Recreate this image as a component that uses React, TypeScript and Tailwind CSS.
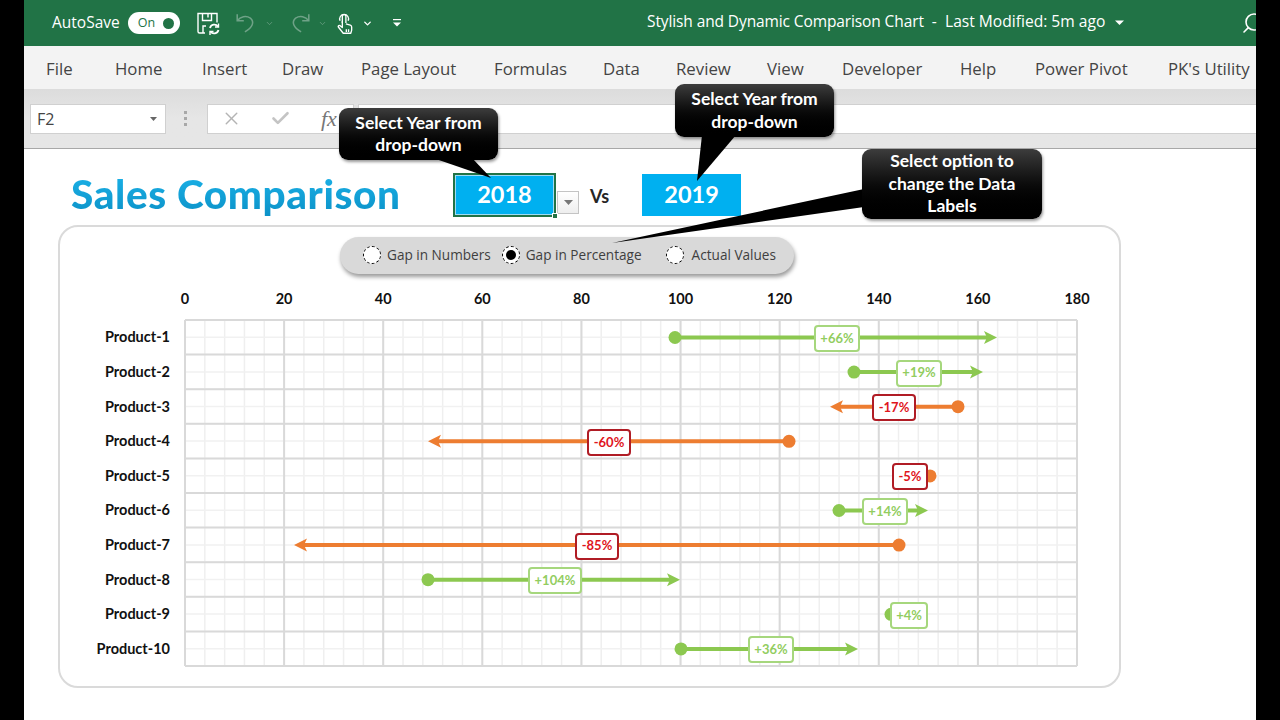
import { ChevronDown, Search, X, Check } from 'lucide-react';

// width of each tab slot, so the text starts line up with the ribbon
const TABS = [
  { name: 'File', w: 69 },
  { name: 'Home', w: 87 },
  { name: 'Insert', w: 80 },
  { name: 'Draw', w: 79 },
  { name: 'Page Layout', w: 133 },
  { name: 'Formulas', w: 109 },
  { name: 'Data', w: 73 },
  { name: 'Review', w: 91 },
  { name: 'View', w: 75 },
  { name: 'Developer', w: 118 },
  { name: 'Help', w: 75 },
  { name: 'Power Pivot', w: 133 },
  { name: "PK's Utility", w: 84 },
];
const AXIS = [0, 20, 40, 60, 80, 100, 120, 140, 160, 180];

const GREEN = '#8cc850';
const ORANGE = '#ed7d31';

// positions are in px inside the plot area (892 x 346)
const ROWS = [
  { name: 'Product-1', from: 490, to: 812, label: '+66%', left: 629, width: 46, up: true },
  { name: 'Product-2', from: 669, to: 798, label: '+19%', left: 711, width: 46, up: true },
  { name: 'Product-3', from: 773, to: 645, label: '-17%', left: 687, width: 44, up: false },
  { name: 'Product-4', from: 604, to: 243, label: '-60%', left: 402, width: 44, up: false },
  { name: 'Product-5', from: 745, to: 745, label: '-5%', left: 707, width: 36, up: false },
  { name: 'Product-6', from: 654, to: 743, label: '+14%', left: 677, width: 46, up: true },
  { name: 'Product-7', from: 714, to: 109, label: '-85%', left: 390, width: 44, up: false },
  { name: 'Product-8', from: 243, to: 495, label: '+104%', left: 343, width: 54, up: true },
  { name: 'Product-9', from: 706, to: 706, label: '+4%', left: 705, width: 38, up: true },
  { name: 'Product-10', from: 496, to: 673, label: '+36%', left: 563, width: 46, up: true },
];

const ROW_H = 34.6;

function Plot() {
  const minorX = Array.from({ length: 46 }, (_, i) => i * 19.82);
  const minorY = Array.from({ length: 21 }, (_, i) => i * (ROW_H / 2));
  return (
    <div className="relative w-[892px] h-[346px]">
      <svg width="892" height="346" className="absolute left-0 top-0 overflow-visible">
        {minorX.map((x) => (
          <line key={x} x1={x} x2={x} y1={0} y2={346} stroke="#efefef" strokeWidth="1.5" />
        ))}
        {minorY.map((y) => (
          <line key={y} x1={0} x2={892} y1={y} y2={y} stroke="#f1f1f1" strokeWidth="1.5" />
        ))}
        {AXIS.map((_, i) => (
          <line key={i} x1={i * 99.11} x2={i * 99.11} y1={0} y2={346} stroke="#d9d9d9" strokeWidth="2" />
        ))}
        {ROWS.map((_, i) => (
          <line key={i} x1={0} x2={892} y1={i * ROW_H} y2={i * ROW_H} stroke="#d9d9d9" strokeWidth="2" />
        ))}
        <line x1={0} x2={892} y1={346} y2={346} stroke="#d9d9d9" strokeWidth="2" />
        {ROWS.map((r, i) => {
          const y = i * ROW_H + 17.5;
          const color = r.up ? GREEN : ORANGE;
          const dir = r.to > r.from ? 1 : -1;
          return (
            <g key={r.name}>
              {r.to !== r.from && (
                <>
                  <line x1={r.from} x2={r.to - dir * 10} y1={y} y2={y} stroke={color} strokeWidth="4" />
                  <polygon
                    points={`${r.to},${y} ${r.to - dir * 13},${y - 6.5} ${r.to - dir * 10},${y} ${r.to - dir * 13},${y + 6.5}`}
                    fill={color}
                  />
                </>
              )}
              <circle cx={r.from} cy={y} r="6.5" fill={color} />
            </g>
          );
        })}
      </svg>
      {ROWS.map((r, i) => (
        <div
          key={r.name}
          className={`absolute h-[27px] flex items-center justify-center rounded-[4px] border-2 bg-white text-[13px] font-bold ${
            r.up ? 'border-[#a6d77d] text-[#92cd5f]' : 'border-[#b01c25] text-[#e0151c]'
          }`}
          style={{ left: r.left, width: r.width, top: i * ROW_H + 5 }}
        >
          {r.label}
        </div>
      ))}
    </div>
  );
}

function Radio({ label, checked, className }: { label: string; checked?: boolean; className: string }) {
  return (
    <div className={`flex items-center ${className}`}>
      <div className="w-[18px] h-[18px] rounded-full bg-white border border-black border-dashed flex items-center justify-center">
        {checked && <div className="w-[10px] h-[10px] rounded-full bg-black" />}
      </div>
      <span className="text-[13.600px] text-[#3f3f3f] font-['Open_Sans',sans-serif]">{label}</span>
    </div>
  );
}

function Callout({ className, lines }: { className: string; lines: string[] }) {
  return (
    <div
      className={`absolute flex flex-col items-center justify-center rounded-[9px] bg-gradient-to-b from-[#3d3d3d] via-[#0c0c0c] to-black text-white font-bold text-[17.500px] leading-[22.500px] shadow-[1px_2px_3px_rgba(0,0,0,0.4)] ${className}`}
    >
      {lines.map((l) => (
        <span key={l}>{l}</span>
      ))}
    </div>
  );
}

function SaveIcon() {
  return (
    <svg width="24" height="24" viewBox="0 0 24 24" fill="none" stroke="white" strokeWidth="1.4">
      <path d="M9 22H3.500A1.500 1.500 0 0 1 2 20.500V2.500h19v9" />
      <path d="M6.500 2.500v7h9v-7M12 2.500v4M7 22v-7h3" />
      <path d="M14 17a4.500 4.500 0 0 1 8-1.500M22.500 19a4.500 4.500 0 0 1-8 1.500" strokeWidth="1.8" />
      <path d="M22.500 12.500v3.500H19M14 24v-3.500h3.500" strokeWidth="1.4" />
    </svg>
  );
}

function TouchIcon() {
  return (
    <svg width="16" height="24" viewBox="0 0 18 24" fill="none" stroke="white" strokeWidth="1.500" strokeLinejoin="round">
      <path d="M6 12V4.500a2 2 0 0 1 4 0V12" />
      <path d="M3.500 9.500a5 5 0 1 1 9 0" />
      <path d="M10 13l5 1.500c1 .3 1.500 1 1.500 2V20l-1 3.500H7L1.500 16.500c-.6-1 .6-2.500 2-1.500L6 17V10" />
      <path d="M10.500 19v3M13 19v3" />
    </svg>
  );
}

export default function App() {
  return (
    <div className="relative w-[1280px] h-[720px] overflow-hidden bg-black px-[24px] font-['Lato',sans-serif]">
      <div className="w-[1232px] h-[720px] bg-white flex flex-col overflow-hidden">
        {/* title bar */}
        <div className="h-[46px] bg-[#217346] flex items-center text-white shrink-0 relative">
          <span className="ml-[28px] text-[15.500px] font-['Open_Sans',sans-serif]">AutoSave</span>
          <div className="ml-[8px] w-[52px] h-[22px] rounded-full bg-white flex items-center justify-between pl-[10px] pr-[6px]">
            <span className="text-[12.500px] text-[#217346] font-['Open_Sans',sans-serif]">On</span>
            <div className="w-[11px] h-[11px] rounded-full bg-[#217346]" />
          </div>
          <div className="ml-[16px]">
            <SaveIcon />
          </div>
          <svg width="22" height="22" viewBox="0 0 20 20" fill="none" stroke="#6fa287" strokeWidth="1.400" className="ml-[15px]">
            <path d="M2 2v6h6M2 8c3-4 8-5 12-2.500 4 3.500 2 8.500-5 12.500" />
          </svg>
          <ChevronDown size={9} className="ml-[8px] text-[#6fa287]" />
          <svg width="22" height="22" viewBox="0 0 20 20" fill="none" stroke="#6fa287" strokeWidth="1.400" className="ml-[15px]">
            <path d="M18 2v6h-6M18 8c-3-4-8-5-12-2.500-4 3.500-2 8.500 5 12.500" />
          </svg>
          <ChevronDown size={9} className="ml-[7px] text-[#6fa287]" />
          <div className="ml-[10px]">
            <TouchIcon />
          </div>
          <ChevronDown size={11} strokeWidth={3} className="ml-[9px]" />
          <svg width="10" height="10" viewBox="0 0 10 10" className="ml-[19px]" fill="white">
            <rect x="1" y="1" width="8" height="1.200" />
            <polygon points="1,4.500 9,4.500 5,8.500" />
          </svg>
          <span className="absolute left-[623px] top-[10px] text-[15.500px] leading-[22px] tracking-[-0.11px] font-['Open_Sans',sans-serif] whitespace-pre">
            Stylish and Dynamic Comparison Chart  -
          </span>
          <span className="absolute left-[921px] top-[10px] text-[15.600px] leading-[22px] font-['Open_Sans',sans-serif] whitespace-pre">
            Last Modified: 5m ago
          </span>
          <svg width="9" height="6" viewBox="0 0 9 6" fill="white" className="absolute left-[1091px]">
            <polygon points="0,0.500 9,0.500 4.500,5" />
          </svg>
          <Search size={24} strokeWidth={1.600} className="absolute left-[1217px] -scale-x-100" />
        </div>

        {/* ribbon tabs */}
        <div className="h-[43px] bg-[#f3f3f3] flex items-center pl-[22px] pt-[2px] text-[16.800px] text-[#444444] font-['Open_Sans',sans-serif] whitespace-nowrap shrink-0">
          {TABS.map((t) => (
            <span key={t.name} className="shrink-0" style={{ width: t.w }}>
              {t.name}
            </span>
          ))}
        </div>

        {/* formula bar */}
        <div className="h-[60px] bg-gradient-to-b from-[#dcdcdc] via-[#e6e6e6] to-[#e6e6e6] border-b border-[#a8a8a8] flex items-center shrink-0 pl-[6px]">
          <div className="w-[136px] h-[30px] bg-white border border-[#d0d0d0] flex items-center justify-between pl-[6px] pr-[8px] text-[#444444] text-[16px] font-['Open_Sans',sans-serif]">
            F2
            <svg width="7" height="4" viewBox="0 0 7 4" fill="#666666">
              <polygon points="0,0 7,0 3.500,4" />
            </svg>
          </div>
          <div className="ml-[18px] flex flex-col gap-[3px]">
            <div className="w-[3px] h-[3px] bg-[#a8a8a8]" />
            <div className="w-[3px] h-[3px] bg-[#a8a8a8]" />
            <div className="w-[3px] h-[3px] bg-[#a8a8a8]" />
          </div>
          <div className="ml-[20px] w-[147px] h-[30px] bg-white border border-[#d0d0d0] flex items-center pl-[13px] text-[#b4b4b4]">
            <X size={21} strokeWidth={1.600} />
            <Check size={21} strokeWidth={3} className="ml-[28px] text-[#c4c4c4]" />
            <span className="ml-[30px] text-[#777777] italic text-[22px] font-['Liberation_Serif',serif]">fx</span>
          </div>
          <div className="ml-[4px] flex-1 h-[30px] bg-white border border-r-0 border-[#d0d0d0]" />
        </div>

        {/* sheet */}
        <div className="flex-1 pl-[34px]">
          <div className="h-[76px] flex">
            <div className="ml-[13px] mt-[21px] w-[328px] h-[48px] text-[40.500px] leading-[48px] font-black tracking-[0.6px] bg-gradient-to-b from-[#1cb4ea] to-[#0a90c6] bg-clip-text text-transparent whitespace-nowrap">
              Sales Comparison
            </div>
            <div className="ml-[54px] mt-[24px] w-[103px] h-[44px] relative bg-[#00b0f0] border-2 border-[#217346] outline outline-1 -outline-offset-3 outline-[#9fdcf5] flex items-center justify-center text-white font-bold text-[23.500px]">
              2018
              <div className="absolute -right-[4px] -bottom-[4px] w-[6px] h-[6px] bg-[#217346] border border-white" />
            </div>
            <div className="ml-[1px] mt-[42px] w-[22px] h-[23px] bg-gradient-to-b from-white to-[#eeeeee] border border-[#c4c4c4] flex items-center justify-center">
              <svg width="9" height="5" viewBox="0 0 9 5" fill="#777777">
                <polygon points="0,0 9,0 4.500,5" />
              </svg>
            </div>
            <div className="ml-[11px] mt-[36px] text-[18px] leading-[22px] font-bold text-[#262626]">Vs</div>
            <div className="ml-[33px] mt-[25px] w-[99px] h-[42px] bg-[#00b0f0] flex items-center justify-center text-white font-bold text-[23.500px]">
              2019
            </div>
          </div>

          {/* chart card */}
          <div className="w-[1063px] h-[463px] border-2 border-[#dadada] rounded-[20px] flex flex-col">
            <div className="ml-[280px] mt-[10px] w-[454px] h-[37px] rounded-full bg-[#d9d9d9] shadow-[1px_3px_4px_rgba(0,0,0,0.4)] flex items-center">
              <Radio label="Gap in Numbers" className="ml-[23px] gap-[6px]" />
              <Radio label="Gap in Percentage" checked className="ml-[11px] gap-[6px]" />
              <Radio label="Actual Values" className="ml-[24px] gap-[8px]" />
            </div>
            <div className="ml-[125px] mt-[15px] h-[20px] flex justify-between w-[892px]">
              {AXIS.map((a) => (
                <div key={a} className="w-0 flex justify-center text-[14.500px] leading-[20px] font-bold text-[#111111]">
                  {a}
                </div>
              ))}
            </div>
            <div className="mt-[11px] flex">
              <div className="w-[110px] flex flex-col">
                {ROWS.map((r) => (
                  <div key={r.name} className="h-[34.600px] flex items-center justify-end text-[14.500px] font-bold text-[#111111]">
                    {r.name}
                  </div>
                ))}
              </div>
              <div className="ml-[15px]">
                <Plot />
              </div>
            </div>
          </div>
        </div>
      </div>

      {/* callout tails */}
      <svg width="1280" height="720" className="absolute left-0 top-0 pointer-events-none">
        <polygon points="433,158 472,158 491,178" fill="black" />
        <polygon points="702,135 736,135 697,181" fill="black" />
        <polygon points="864,189 864,207 612,243" fill="black" />
      </svg>
      <Callout className="left-[339px] top-[108px] w-[159px] h-[52px]" lines={['Select Year from', 'drop-down']} />
      <Callout className="left-[675px] top-[84px] w-[159px] h-[53px]" lines={['Select Year from', 'drop-down']} />
      <Callout className="left-[862px] top-[149px] w-[180px] h-[70px]" lines={['Select option to', 'change the Data', 'Labels']} />
    </div>
  );
}
